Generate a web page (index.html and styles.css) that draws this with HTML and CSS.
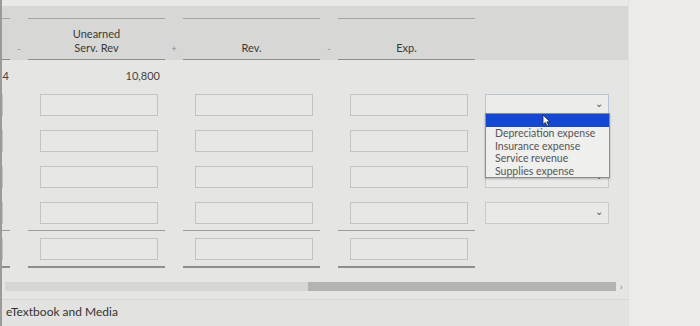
FILE: index.html
```html
<!DOCTYPE html>
<html>
<head>
<meta charset="utf-8">
<link rel="stylesheet" href="styles.css">
</head>
<body>
<div class="page">
  <div class="main">
    <div class="topstrip"></div>
    <div class="scroller">
      <div class="table">
        <div class="grid head">
          <div class="hcell"></div>
          <div class="op">-</div>
          <div class="hcell">Unearned<br>Serv. Rev</div>
          <div class="op">+</div>
          <div class="hcell">Rev.</div>
          <div class="op">-</div>
          <div class="hcell">Exp.</div>
        </div>
        <div class="body">
          <div class="grid amt">
            <div class="num first">4</div><div></div>
            <div class="num">10,800</div><div></div>
            <div></div><div></div>
            <div></div><div></div><div></div>
          </div>
          <div class="grid row">
            <div class="cell"><span class="inp"></span></div><div></div>
            <div class="cell"><span class="inp"></span></div><div></div>
            <div class="cell"><span class="inp"></span></div><div></div>
            <div class="cell"><span class="inp"></span></div><div></div>
            <div class="selcell">
              <span class="sel focus"><span class="chev">&#8964;</span></span>
              <div class="dropdown">
                <div class="opt hl">
                  <svg class="cursor" width="9" height="13" viewBox="0 0 9 13"><path d="M1 1 L1 10.5 L3.3 8.4 L5 12 L6.5 11.3 L4.9 7.8 L8 7.8 Z" fill="#fff" stroke="#222" stroke-width="0.8"/></svg>
                </div>
                <div class="opt">Depreciation expense</div>
                <div class="opt">Insurance expense</div>
                <div class="opt">Service revenue</div>
                <div class="opt">Supplies expense</div>
              </div>
            </div>
          </div>
          <div class="grid row">
            <div class="cell"><span class="inp"></span></div><div></div>
            <div class="cell"><span class="inp"></span></div><div></div>
            <div class="cell"><span class="inp"></span></div><div></div>
            <div class="cell"><span class="inp"></span></div><div></div>
            <div class="selcell"><span class="sel"><span class="chev">&#8964;</span></span></div>
          </div>
          <div class="grid row">
            <div class="cell"><span class="inp"></span></div><div></div>
            <div class="cell"><span class="inp"></span></div><div></div>
            <div class="cell"><span class="inp"></span></div><div></div>
            <div class="cell"><span class="inp"></span></div><div></div>
            <div class="selcell"><span class="sel"><span class="chev">&#8964;</span></span></div>
          </div>
          <div class="grid row r4">
            <div class="cell line"><span class="inp"></span></div><div></div>
            <div class="cell line"><span class="inp"></span></div><div></div>
            <div class="cell line"><span class="inp"></span></div><div></div>
            <div class="cell line"><span class="inp"></span></div><div></div>
            <div class="selcell"><span class="sel"><span class="chev">&#8964;</span></span></div>
          </div>
          <div class="grid row r5">
            <div class="cell total"><span class="inp"></span></div><div></div>
            <div class="cell total"><span class="inp"></span></div><div></div>
            <div class="cell total"><span class="inp"></span></div><div></div>
            <div class="cell total"><span class="inp"></span></div><div></div>
            <div></div>
          </div>
        </div>
      </div>
    </div>
    <div class="scrollbar">
      <div class="track"><div class="thumb"></div></div>
      <span class="arrow">&#8250;</span>
    </div>
    <div class="footer">eTextbook and Media</div>
  </div>
  <div class="side"></div>
</div>
</body>
</html>
```
FILE: styles.css
```css
* { box-sizing: border-box; }
html, body { margin: 0; padding: 0; }
body {
  background: #ebebe9;
  font-family: Lato, "Liberation Sans", sans-serif;
  color: #3a3a3a;
  width: 700px;
  height: 326px;
  overflow: hidden;
}
.page { display: flex; height: 326px; }
.main {
  width: 628px;
  background: #e5e5e3;
  display: flex;
  flex-direction: column;
  border-left: 2px solid #9a9a98;
}
.side { flex: 1; background: #ecebea; border-left: 1px solid #e0e0de; }
.topstrip { height: 6px; background: #e9e9e7; }
.scroller { overflow: hidden; width: 626px; }
.table { margin-left: -129px; width: 736px; }
.grid {
  display: grid;
  grid-template-columns: 137px 18px 137px 18px 137px 18px 137px 10px 124px;
}
.head {
  background: #d7d7d5;
  padding-top: 12px;
  height: 54px;
  width: 757px;
}
.hcell {
  border-top: 1px solid #a5a5a3;
  border-bottom: 1px solid #8e8e8c;
  display: flex;
  align-items: flex-end;
  justify-content: center;
  text-align: center;
  font-size: 11px;
  line-height: 14px;
  padding-bottom: 4px;
  color: #3a3a3a;
}
.op {
  display: flex;
  align-items: flex-end;
  justify-content: center;
  font-size: 9px;
  color: #8a8a88;
  padding-bottom: 6px;
}
.body { display: flex; flex-direction: column; }
.amt { height: 28px; padding-top: 9px; }
.num {
  text-align: right;
  font-size: 11px;
  line-height: 14px;
  padding-right: 5px;
  color: #444;
}
.num.first { padding-right: 1px; }
.row { margin-top: 6px; height: 22px; }
.row + .row { margin-top: 14px; }
.cell { padding-left: 12px; }
.inp {
  display: block;
  width: 118px;
  height: 22px;
  border: 1px solid #c3c3c1;
  background: #e7e7e5;
}
.r4 { height: 29px; }
.cell.line { border-bottom: 1px solid #9c9c9a; height: 29px; }
.r4 + .r5 { margin-top: 7px; }
.r5 { height: 30px; }
.cell.total { border-bottom: 2px solid #8e8e8c; height: 30px; }
.selcell { position: relative; }
.sel {
  display: flex;
  justify-content: flex-end;
  align-items: center;
  width: 124px;
  height: 22px;
  border: 1px solid #cacaca;
  background: #e9e9e8;
  padding-right: 5px;
}
.sel.focus { border-color: #b8c4d8; background: #ececeb; }
.chev { font-size: 10px; color: #555; line-height: 10px; margin-top: -4px; }
.dropdown {
  position: absolute;
  left: 0;
  top: 19px;
  width: 125px;
  height: 65px;
  background: #efefee;
  border: 1px solid #8c8c8c;
  box-shadow: 0 1px 2px rgba(0,0,0,0.25);
  z-index: 5;
}
.opt {
  font-size: 10.5px;
  line-height: 12.6px;
  padding-left: 9px;
  color: #555;
  white-space: nowrap;
}
.opt.hl {
  background: #1447d2;
  height: 13px;
  position: relative;
}
.cursor { position: absolute; left: 56px; top: 0px; }
.scrollbar {
  margin-top: 13px;
  height: 10px;
  display: flex;
  align-items: center;
  padding-left: 3px;
}
.track {
  width: 611px;
  height: 9px;
  background: #d6d6d4;
  display: flex;
  justify-content: flex-end;
}
.thumb { width: 308px; height: 9px; background: #b3b3b1; }
.arrow { font-size: 9px; color: #777; margin-left: 4px; }
.footer {
  margin-top: 8px;
  flex: 1;
  border-top: 1px solid #d6d6d4;
  background: #e2e2e0;
  font-size: 12px;
  padding-left: 4px;
  padding-top: 4px;
  color: #333;
}
```
